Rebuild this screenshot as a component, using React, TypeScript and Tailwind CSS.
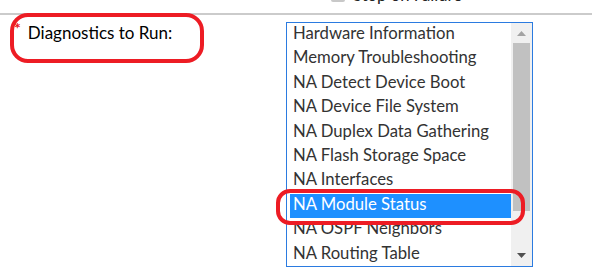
import { useState } from "react";

const diagnostics = [
  "Hardware Information",
  "Memory Troubleshooting",
  "NA Detect Device Boot",
  "NA Device File System",
  "NA Duplex Data Gathering",
  "NA Flash Storage Space",
  "NA Interfaces",
  "NA Module Status",
  "NA OSPF Neighbors",
  "NA Routing Table",
];

export default function App() {
  const [selected, setSelected] = useState("NA Module Status");

  return (
    <div
      className="relative w-[592px] h-[274px] overflow-hidden bg-white text-[#222]"
      style={{ fontFamily: "Lato, 'Open Sans', sans-serif" }}
    >
      {/* clipped row above */}
      <div className="h-[13px] overflow-hidden flex items-end pl-[331px]">
        <div className="flex items-center gap-[8px] -translate-y-[9px] text-[16.7px] leading-[18px]">
          <span className="w-[14px] h-[14px] rounded-[2px] bg-[#c8c8c8]" />
          <span>Stop on Failure</span>
        </div>
      </div>
      <div className="h-[2px] bg-[#cbcbcb]" />

      <div className="flex pt-[7px]">
        {/* Label */}
        <div className="w-[286px] flex items-start pl-[14px]">
          <span className="text-[#e8141c] text-[16px] leading-[14px] font-bold mr-[7px] mt-[-1px]">*</span>
          <span className="text-[17px] leading-[20px] text-black mt-[1px]">Diagnostics to Run:</span>
        </div>

        {/* Listbox */}
        <div className="w-[247px] h-[245px] border border-[#2b7be0] flex">
          <ul className="flex-1 overflow-hidden pl-[3px]">
            {diagnostics.map((d) => (
              <li
                key={d}
                onClick={() => setSelected(d)}
                className={
                  "h-[24.4px] leading-[20px] pl-[3px] text-[16.7px] whitespace-nowrap cursor-default " +
                  (selected === d ? "bg-[#1e90ff] text-white" : "text-[#333]")
                }
              >
                {d}
              </li>
            ))}
          </ul>
          {/* scrollbar */}
          <div className="w-[21px] bg-[#f0f0f0] flex flex-col items-center">
            <div className="h-[20px] flex items-center justify-center">
              <svg width="9" height="5" viewBox="0 0 9 5">
                <path d="M4.5 0 L9 5 L0 5 Z" fill="#a3a3a3" />
              </svg>
            </div>
            <div className="w-[17px] h-[168px] bg-[#c1c1c1]" />
            <div className="flex-1" />
            <div className="h-[22px] flex items-center justify-center">
              <svg width="9" height="5" viewBox="0 0 9 5">
                <path d="M0 0 L9 0 L4.5 5 Z" fill="#505050" />
              </svg>
            </div>
          </div>
        </div>
      </div>

      {/* red annotations */}
      <svg className="absolute inset-0 pointer-events-none" width="592" height="274">
        <rect x="12" y="15" width="190" height="46" rx="16" fill="none" stroke="#ed1c24" strokeWidth="4" />
        <rect x="278" y="191" width="245" height="32" rx="12" fill="none" stroke="#ed1c24" strokeWidth="4" />
      </svg>
    </div>
  );
}
